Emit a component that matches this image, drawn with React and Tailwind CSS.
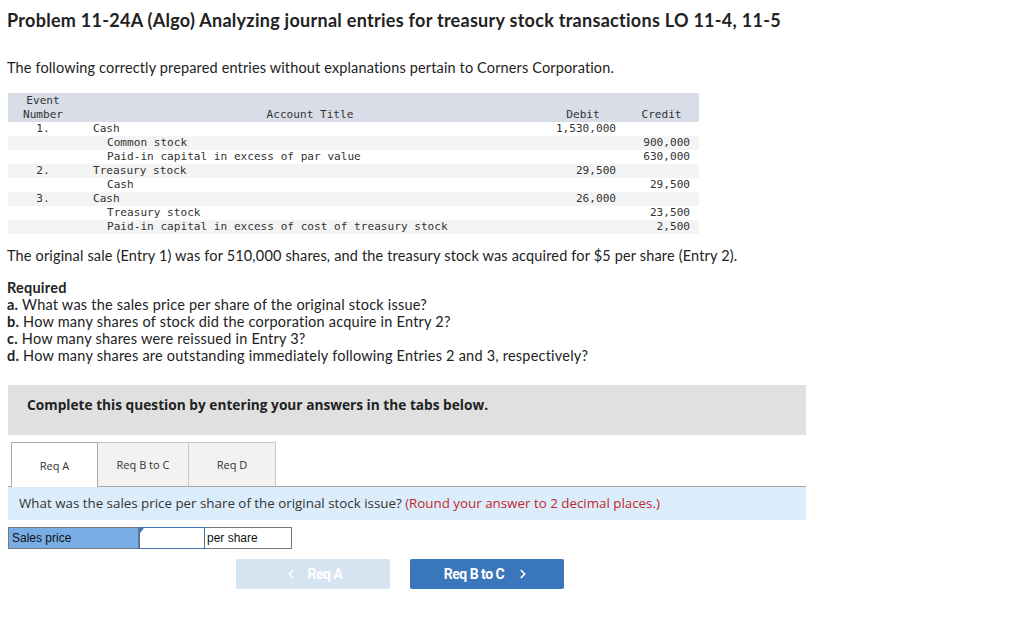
import { ChevronLeft, ChevronRight } from "lucide-react";

const rows = [
  { num: "1.", title: "Cash", indent: false, debit: "1,530,000", credit: "" },
  { num: "", title: "Common stock", indent: true, debit: "", credit: "900,000" },
  { num: "", title: "Paid-in capital in excess of par value", indent: true, debit: "", credit: "630,000" },
  { num: "2.", title: "Treasury stock", indent: false, debit: "29,500", credit: "" },
  { num: "", title: "Cash", indent: true, debit: "", credit: "29,500" },
  { num: "3.", title: "Cash", indent: false, debit: "26,000", credit: "" },
  { num: "", title: "Treasury stock", indent: true, debit: "", credit: "23,500" },
  { num: "", title: "Paid-in capital in excess of cost of treasury stock", indent: true, debit: "", credit: "2,500" },
];

const questions = [
  ["a.", "What was the sales price per share of the original stock issue?"],
  ["b.", "How many shares of stock did the corporation acquire in Entry 2?"],
  ["c.", "How many shares were reissued in Entry 3?"],
  ["d.", "How many shares are outstanding immediately following Entries 2 and 3, respectively?"],
];

const JournalTable = () => (
  <table className="mt-[15px] ml-[1px] table-fixed border-collapse w-[691px] text-[#333] text-[11.1px] leading-[14px] font-['DejaVu_Sans_Mono',monospace]">
    <colgroup>
      <col className="w-[70px]" />
      <col className="w-[464px]" />
      <col className="w-[82px]" />
      <col className="w-[75px]" />
    </colgroup>
    <thead>
      <tr className="bg-[#d9dde8] align-bottom">
        <th className="font-normal text-center pt-px">
          Event
          <br />
          Number
        </th>
        <th className="font-normal text-center">Account Title</th>
        <th className="font-normal text-center">Debit</th>
        <th className="font-normal text-center">Credit</th>
      </tr>
    </thead>
    <tbody>
      {rows.map((r, i) => (
        <tr key={i} className={i % 2 === 1 ? "bg-[#f4f4f4] h-[14px]" : "bg-white h-[14px]"}>
          <td className="text-center p-0">{r.num}</td>
          <td className={r.indent ? "pl-[29px] p-0 whitespace-nowrap" : "pl-[15px] p-0 whitespace-nowrap"}>{r.title}</td>
          <td className="text-right pr-[8px] p-0">{r.debit}</td>
          <td className="text-right pr-[9px] p-0">{r.credit}</td>
        </tr>
      ))}
    </tbody>
  </table>
);

const Tabs = () => (
  <div className="mt-[7px] ml-[1px] w-[798px] flex border-b border-[#a9a9a9] h-[45px] font-['Open_Sans',sans-serif] text-[11px] text-[#333]">
    <div className="ml-[3px] w-[87px] h-[45px] -mb-px bg-white border border-b-0 border-[#a9a9a9] flex items-center justify-center pt-[2px]">
      Req A
    </div>
    <div className="w-[91px] h-[44px] bg-[#f2f2f2] border border-l-0 border-b-0 border-[#c8c8c8] flex items-center justify-center pt-[2px]">
      Req B to C
    </div>
    <div className="w-[87px] h-[44px] bg-[#f2f2f2] border border-l-0 border-b-0 border-[#c8c8c8] flex items-center justify-center pt-[2px]">
      Req D
    </div>
  </div>
);

export default function App() {
  return (
    <div className="min-h-[620px] bg-white pl-[7px] pt-[8px] text-[#222] font-['Lato',sans-serif]">
      <h1 className="text-[18px] leading-[24px] font-bold tracking-[0.28px]">
        Problem 11-24A (Algo) Analyzing journal entries for treasury stock transactions LO 11-4, 11-5
      </h1>
      <p className="mt-[26px] text-[14.5px] leading-[20px] tracking-[0.14px]">
        The following correctly prepared entries without explanations pertain to Corners Corporation.
      </p>

      <JournalTable />

      <p className="mt-[12px] text-[14.5px] leading-[20px] tracking-[0.16px]">
        The original sale (Entry 1) was for 510,000 shares, and the treasury stock was acquired for $5 per share (Entry 2).
      </p>

      <div className="mt-[13px] text-[14.5px] leading-[17px] tracking-[0.22px]">
        <div className="font-bold">Required</div>
        {questions.map(([l, q]) => (
          <div key={l}>
            <span className="font-bold">{l}</span> {q}
          </div>
        ))}
      </div>

      <div className="mt-[21px] ml-[1px] w-[798px] h-[50px] bg-[#e0e0e0] pt-[12px] pl-[19px] text-[13.7px] leading-[16px] font-bold text-[#222] font-['Open_Sans',sans-serif]">
        Complete this question by entering your answers in the tabs below.
      </div>

      <Tabs />

      <div className="ml-[1px] w-[798px] h-[33px] bg-[#dbedfb] pl-[11px] flex items-center text-[13.35px] text-[#333] font-['Open_Sans',sans-serif]">
        What was the sales price per share of the original stock issue?&nbsp;
        <span className="text-[#c2272d]">(Round your answer to 2 decimal places.)</span>
      </div>

      <div className="mt-[7px] ml-[1px] flex h-[22px] text-[12px] font-['Liberation_Sans',Arial,sans-serif] text-[#111]">
        <div className="w-[131px] bg-[#79ade5] border border-[#777] flex items-center pl-[3px]">Sales price</div>
        <div className="relative w-[66px] bg-white border border-[#3d72b4]">
          <span className="absolute left-0 top-0 w-0 h-0 border-t-[5px] border-r-[4px] border-t-[#3d72b4] border-r-transparent" />
        </div>
        <div className="w-[87px] bg-white border border-l-0 border-[#777] flex items-center pl-[2px]">per share</div>
      </div>

      <div className="mt-[10px] ml-[229px] flex gap-[20px] font-['Roboto',sans-serif] text-[14px] font-bold tracking-[-0.5px] text-white">
        <div className="w-[154px] h-[30px] rounded-[2px] bg-[#d6e3f1] flex items-center justify-center gap-[10px]">
          <ChevronLeft size={14} strokeWidth={3} />
          <span>Req A</span>
        </div>
        <div className="w-[154px] h-[30px] rounded-[2px] bg-[#3a76bb] flex items-center justify-center gap-[12px]">
          <span>Req B to C</span>
          <ChevronRight size={14} strokeWidth={3} />
        </div>
      </div>
    </div>
  );
}
